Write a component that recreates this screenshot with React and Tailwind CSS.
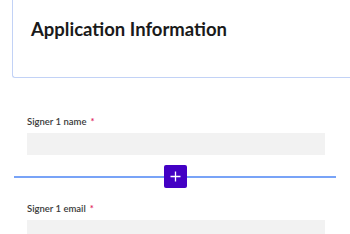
export default function App() {
  return (
    <div className="w-[350px] h-[234px] overflow-hidden bg-white font-['Lato',sans-serif]">
      <div className="ml-[12px] h-[78px] border-l border-b border-[#c2d2f6] rounded-bl-[3px] pl-[18px] pt-[17px]">
        <h1 className="text-[18.5px] leading-[24px] font-bold text-[#1a1a1a] tracking-[0px]">
          Application Information
        </h1>
      </div>

      <div className="px-[27px] pt-[38px]">
        <label className="block text-[9.5px] leading-[12px] font-semibold text-[#3a3a3a]">
          Signer 1 name<span className="ml-[4px] text-[#e0245e]">*</span>
        </label>
        <div className="mt-[5px] h-[22px] w-[298px] bg-[#f2f2f2]" />
      </div>

      <div className="relative mt-[10px] h-[23px] mx-[14px] flex items-center justify-center">
        <div className="absolute left-0 right-0 top-[11px] h-[2px] bg-[#78a3f7]" />
        <button
          type="button"
          className="relative z-10 flex h-[23px] w-[23px] items-center justify-center rounded-[2px] bg-[#4300c4]"
        >
          <svg width="11" height="11" viewBox="0 0 11 11">
            <path d="M5.5 0.5v10M0.5 5.5h10" stroke="white" strokeWidth="1.3" />
          </svg>
        </button>
      </div>

      <div className="px-[27px] pt-[15px]">
        <label className="block text-[9.5px] leading-[12px] font-semibold text-[#3a3a3a]">
          Signer 1 email<span className="ml-[4px] text-[#e0245e]">*</span>
        </label>
        <div className="mt-[5px] h-[22px] w-[298px] bg-[#f2f2f2]" />
      </div>
    </div>
  );
}
